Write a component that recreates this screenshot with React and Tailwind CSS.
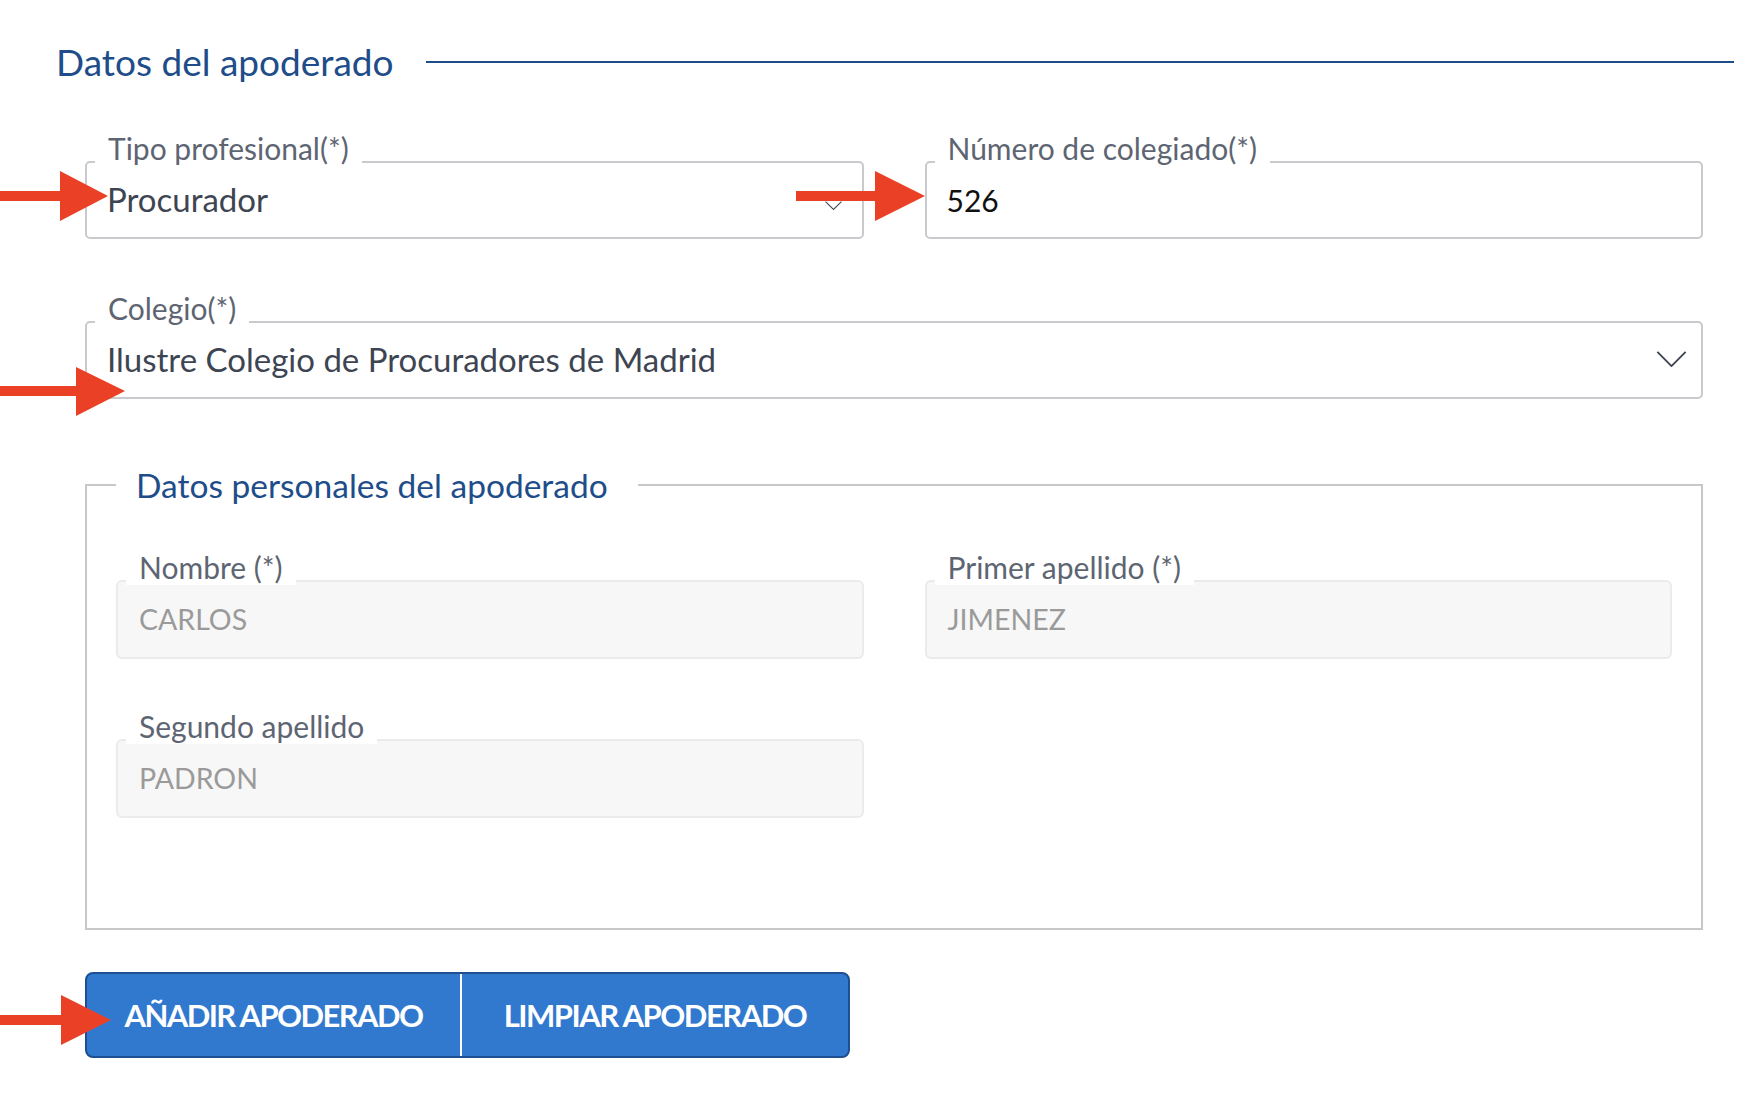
import React from "react";

function Chevron({ className }) {
  return (
    <svg viewBox="0 0 32 17" className={className} fill="none" stroke="currentColor" strokeWidth="2">
      <path d="M1 1l15 15L31 1" />
    </svg>
  );
}

function Field({ label, children, muted = false, right = null }) {
  return (
    <div className="relative">
      <span className="absolute left-[10px] top-[-31px] z-10 px-[13px] bg-white text-[30px] leading-[36px] text-[#5e6572] whitespace-nowrap">
        {label}
      </span>
      <div
        className={
          muted
            ? "h-[79px] rounded-[6px] border-2 border-[#ebebed] bg-[#f7f7f7] flex items-center pl-[21px] pr-[14px]"
            : "h-[78px] rounded-[5px] border-2 border-[#c9cacd] bg-white flex items-center pl-[20px] pr-[14px]"
        }
      >
        <div className="flex-1 min-w-0">{children}</div>
        {right}
      </div>
    </div>
  );
}

export default function App() {
  return (
    <div className="relative w-[1748px] h-[1100px] bg-white overflow-hidden font-['Lato',sans-serif]">
      <div className="pl-[56px] pr-[14px] pt-[40px]">
        {/* titulo de seccion */}
        <div className="flex items-center gap-[32px] h-[44px]">
          <h2 className="text-[37px] leading-[44px] text-[#1e4d8a] whitespace-nowrap">Datos del apoderado</h2>
          <div className="flex-1 h-[2px] bg-[#1e4d8a]" />
        </div>
      </div>

      <div className="pl-[85px] pr-[45px]">
        <div className="grid grid-cols-2 gap-x-[61px] mt-[77px]">
          <Field
            label="Tipo profesional(*)"
            right={<Chevron className="w-[17px] h-[9px] mt-[10px] mr-[6px] text-[#3e4552]" />}
          >
            <span className="text-[33px] text-[#3e4552]">Procurador</span>
          </Field>
          <Field label="Número de colegiado(*)">
            <span className="text-[30px] text-[#111]">526</span>
          </Field>
        </div>

        <div className="mt-[82px]">
          <Field
            label="Colegio(*)"
            right={<Chevron className="w-[31px] h-[16px] mt-[-2px] text-[#3e4552]" />}
          >
            <span className="text-[33px] text-[#3e4552]">Ilustre Colegio de Procuradores de Madrid</span>
          </Field>
        </div>

        <fieldset className="mt-[66px] border-2 border-[#c8c8c8] px-[29px] pb-[110px]">
          <legend className="pl-[20px] pr-[30px] text-[33.5px] leading-[40px] text-[#1e4d8a]">
            Datos personales del apoderado
          </legend>
          <div className="grid grid-cols-2 gap-x-[61px] gap-y-[80px] mt-[75px]">
            <Field label="Nombre (*)" muted>
              <span className="text-[28.5px] text-[#9a9a9a]">CARLOS</span>
            </Field>
            <Field label="Primer apellido (*)" muted>
              <span className="text-[28.5px] text-[#9a9a9a]">JIMENEZ</span>
            </Field>
            <Field label="Segundo apellido" muted>
              <span className="text-[28.5px] text-[#9a9a9a]">PADRON</span>
            </Field>
          </div>
        </fieldset>

        <div className="mt-[42px] inline-flex h-[86px] rounded-[8px] border-2 border-[#1d4f91] bg-[#3079cf] overflow-hidden">
          <button className="w-[375px] h-full border-r-2 border-white text-white font-bold text-[31px] tracking-[-1.6px]">
            AÑADIR APODERADO
          </button>
          <button className="w-[386px] h-full text-white font-bold text-[31px] tracking-[-1.5px]">
            LIMPIAR APODERADO
          </button>
        </div>
      </div>

      {/* flechas de anotacion */}
      <svg className="absolute inset-0 pointer-events-none" width="1748" height="1100" viewBox="0 0 1748 1100">
        <g fill="#ea4126">
          <rect x="0" y="191" width="62" height="10" />
          <polygon points="60,171 108,196 60,221" />
          <rect x="796" y="191" width="81" height="10" />
          <polygon points="875,171 925,196 875,221" />
          <rect x="0" y="386" width="78" height="10" />
          <polygon points="76,367 125,391 76,416" />
          <rect x="0" y="1015" width="63" height="10" />
          <polygon points="61,995 111,1020 61,1045" />
        </g>
      </svg>
    </div>
  );
}
